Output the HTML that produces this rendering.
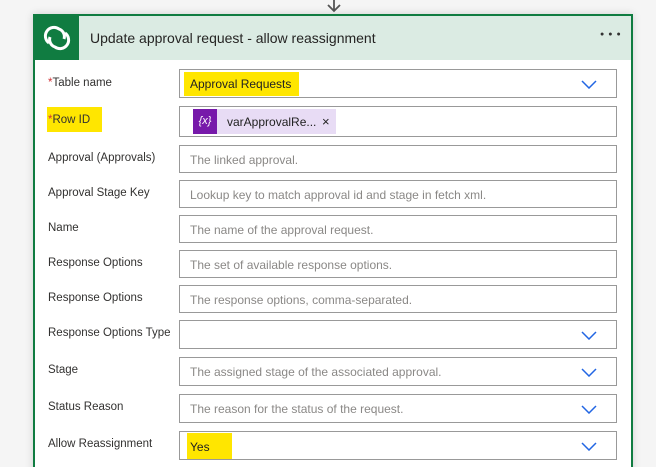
<!DOCTYPE html><html><head><style>
html,body{margin:0;width:656px;height:467px;overflow:hidden}
body{background:#f5f5f5;font-family:"Liberation Sans",sans-serif;position:relative}
.card{position:absolute;left:33px;top:14px;width:596px;height:460px;border:2px solid #107c41;border-bottom:none;background:#fff;box-shadow:0 0 8px rgba(0,0,0,.15)}
.hdr{position:absolute;left:0;top:0;width:596px;height:44px;background:#dbebe3}
.ic{position:absolute;left:0;top:0;width:44px;height:44px;background:#107c41}
.title{position:absolute;left:55px;top:14px;font-size:14px;color:#252423}
.dots{position:absolute;left:565px;top:15px;font-size:7px;letter-spacing:4px;color:#333}
.lbl{position:absolute;left:48px;font-size:11.5px;color:#323130}
.in{position:absolute;left:179px;width:438px;border:1px solid #999;background:#fff;box-sizing:border-box}
.ph{position:absolute;left:10px;font-size:12px;color:#8a8886}
.chev{position:absolute;right:19px;width:16px;height:9px}
.hl{background:#ffe600}
</style></head><body>
<svg style="position:absolute;left:324px;top:0" width="20" height="14"><path d="M10 0V11M4 5L10 11L16 5" stroke="#555" stroke-width="1.8" fill="none"/></svg>
<div class="card">
<div class="hdr"><div class="ic"><svg width="44" height="44"><g fill="none" stroke="#fff" stroke-width="3"><path d="M14 27a8 8 0 0 1 10-14a8 8 0 0 1 5 10"/><path d="M30 17a8 8 0 0 1-10 14a8 8 0 0 1-5-10"/></g></svg></div>
<div class="title">Update approval request - allow reassignment</div>
<div class="dots">●●●</div></div>
</div>
<div class="lbl" style="top:77px"><span style="color:#d13438">*</span>Table name</div>
<div class="in" style="top:69px;height:29px"><span class="hl" style="position:absolute;left:4px;top:2px;padding:5px 8px 5px 6px;font-size:12px;color:#222">Approval Requests</span><svg class="chev" style="top:10px" viewBox="0 0 16 9"><path d="M1 1L8 8L15 1" stroke="#2266e3" stroke-width="1.5" fill="none"/></svg></div>
<div class="lbl hl" style="top:107px;left:47px;padding:7px 12px 6px 1px"><span style="color:#d13438">*</span>Row ID</div>
<div class="in" style="top:106px;height:31px"><div style="position:absolute;left:13px;top:2px;height:25px;width:143px;background:#e8dcf5"><div style="position:absolute;left:0;top:0;width:24px;height:25px;background:#7719aa;color:#fff;font-size:11px;text-align:center;line-height:24px;font-style:italic">{x}</div><span style="position:absolute;left:34px;top:6px;font-size:12px;color:#222">varApprovalRe...</span><span style="position:absolute;left:129px;top:5px;font-size:13px;color:#222">×</span></div></div>
<div class="lbl" style="top:152px">Approval (Approvals)</div><div class="in" style="top:145px;height:28px"><span class="ph" style="top:7px">The linked approval.</span></div>
<div class="lbl" style="top:187px">Approval Stage Key</div><div class="in" style="top:180px;height:28px"><span class="ph" style="top:7px">Lookup key to match approval id and stage in fetch xml.</span></div>
<div class="lbl" style="top:222px">Name</div><div class="in" style="top:215px;height:28px"><span class="ph" style="top:7px">The name of the approval request.</span></div>
<div class="lbl" style="top:257px">Response Options</div><div class="in" style="top:250px;height:28px"><span class="ph" style="top:7px">The set of available response options.</span></div>
<div class="lbl" style="top:292px">Response Options</div><div class="in" style="top:285px;height:28px"><span class="ph" style="top:7px">The response options, comma-separated.</span></div>
<div class="lbl" style="top:327px">Response Options Type</div><div class="in" style="top:320px;height:29px"><svg class="chev" style="top:10px" viewBox="0 0 16 9"><path d="M1 1L8 8L15 1" stroke="#2266e3" stroke-width="1.5" fill="none"/></svg></div>
<div class="lbl" style="top:364px">Stage</div><div class="in" style="top:357px;height:29px"><span class="ph" style="top:7px">The assigned stage of the associated approval.</span><svg class="chev" style="top:10px" viewBox="0 0 16 9"><path d="M1 1L8 8L15 1" stroke="#2266e3" stroke-width="1.5" fill="none"/></svg></div>
<div class="lbl" style="top:401px">Status Reason</div><div class="in" style="top:394px;height:29px"><span class="ph" style="top:7px">The reason for the status of the request.</span><svg class="chev" style="top:10px" viewBox="0 0 16 9"><path d="M1 1L8 8L15 1" stroke="#2266e3" stroke-width="1.5" fill="none"/></svg></div>
<div class="lbl" style="top:438px">Allow Reassignment</div><div class="in" style="top:431px;height:29px"><span class="hl" style="position:absolute;left:7px;top:1px;padding:7px 22px 5px 3px;font-size:12px;color:#222">Yes</span><svg class="chev" style="top:10px" viewBox="0 0 16 9"><path d="M1 1L8 8L15 1" stroke="#2266e3" stroke-width="1.5" fill="none"/></svg></div>
</body></html>
